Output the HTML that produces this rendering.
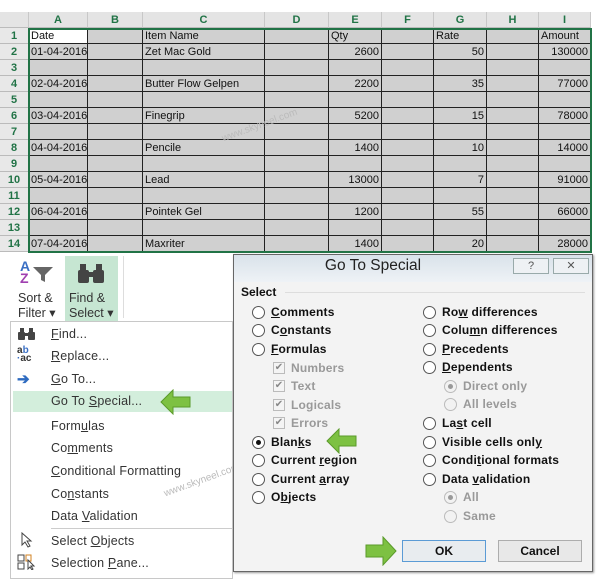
<!DOCTYPE html>
<html><head><meta charset="utf-8"><style>
*{margin:0;padding:0;box-sizing:border-box}
body{width:600px;height:580px;background:#fff;position:relative;overflow:hidden;font-family:"Liberation Sans",sans-serif;}
.a{position:absolute;white-space:nowrap}
.c{position:absolute;background:#d0d0d0;border-right:1px solid #222;border-bottom:1px solid #222;font-size:11px;line-height:16px;padding:0 2px;color:#111;overflow:hidden;white-space:nowrap}
.h{position:absolute;background:#e4e4e4;color:#217346;font-weight:bold;font-size:11px;text-align:center;line-height:16px;border-right:1px solid #c8c8c8;border-bottom:1px solid #bbb}
.r{text-align:right}
.mi{position:absolute;left:51px;font-size:12.5px;color:#333;letter-spacing:.2px;white-space:nowrap}
.rad{position:absolute;width:13px;height:13px;border:1px solid #555;border-radius:50%;background:#fff}
.rad.dis{border-color:#bbb;background:#f2f2f2}
.dot::after{content:"";position:absolute;left:3px;top:3px;width:5px;height:5px;border-radius:50%;background:#111}
.dot.dis::after{background:#999}
.t{position:absolute;font-size:12px;color:#111;font-weight:bold;letter-spacing:.2px;white-space:nowrap}
.t.g{color:#999}
.cb{position:absolute;width:12px;height:12px;border:1px solid #bbb;background:#f4f4f4;font-size:10px;color:#888;line-height:10px;text-align:center}
u{text-decoration:underline}
</style></head><body>

<div class="h" style="left:0;top:12px;width:29px;height:16px;background:#e4e4e4"></div>
<div class="h" style="left:29px;top:12px;width:59px;height:16px">A</div>
<div class="h" style="left:88px;top:12px;width:55px;height:16px">B</div>
<div class="h" style="left:143px;top:12px;width:122px;height:16px">C</div>
<div class="h" style="left:265px;top:12px;width:64px;height:16px">D</div>
<div class="h" style="left:329px;top:12px;width:53px;height:16px">E</div>
<div class="h" style="left:382px;top:12px;width:52px;height:16px">F</div>
<div class="h" style="left:434px;top:12px;width:53px;height:16px">G</div>
<div class="h" style="left:487px;top:12px;width:52px;height:16px">H</div>
<div class="h" style="left:539px;top:12px;width:52px;height:16px">I</div>
<div id="grid"></div>
<script>
var cols=[[29,59],[88,55],[143,122],[265,64],[329,53],[382,52],[434,53],[487,52],[539,52]];
var data={1:["Date","","Item Name","","Qty","","Rate","","Amount"],
2:["01-04-2016","","Zet Mac Gold","","2600","","50","","130000"],
4:["02-04-2016","","Butter Flow Gelpen","","2200","","35","","77000"],
6:["03-04-2016","","Finegrip","","5200","","15","","78000"],
8:["04-04-2016","","Pencile","","1400","","10","","14000"],
10:["05-04-2016","","Lead","","13000","","7","","91000"],
12:["06-04-2016","","Pointek Gel","","1200","","55","","66000"],
14:["07-04-2016","","Maxriter","","1400","","20","","28000"]};
var h="";
for(var r=1;r<=14;r++){var y=28+(r-1)*16;
h+='<div class="h" style="left:0;top:'+y+'px;width:29px;height:16px;background:#e8e8e8">'+r+'</div>';
for(var c=0;c<9;c++){var t=data[r]?data[r][c]:"";var right=(r>1&&c>=4)?" r":"";
var bg=(r==1&&c==0)?"background:#fff;":"";
h+='<div class="c'+right+'" style="'+bg+'left:'+cols[c][0]+'px;top:'+y+'px;width:'+cols[c][1]+'px;height:16px">'+t+'</div>';}}
document.getElementById("grid").innerHTML=h;
</script>
<div class="a" style="left:28px;top:28px;width:564px;height:225px;border:2px solid #217346"></div>
<div class="a" style="left:220px;top:120px;font-size:10px;color:#bbb;transform:rotate(-20deg)">www.skyneel.com</div>

<div class="a" style="left:20px;top:260px;font-size:14px;font-weight:bold;color:#3a6fc4;line-height:12px">A<br><span style="color:#a040b0">Z</span></div>
<svg class="a" style="left:32px;top:265px" width="22" height="18"><path d="M1 2h20l-8 8v7l-4-2v-5z" fill="#666"/></svg>
<div class="a" style="left:18px;top:291px;font-size:12.5px;color:#333;line-height:15px">Sort &amp;<br>Filter ▾</div>
<div class="a" style="left:65px;top:256px;width:53px;height:65px;background:#c6e6d2"></div>
<svg class="a" style="left:76px;top:262px" width="30" height="22"><rect x="2" y="8" width="11" height="13" rx="2" fill="#444"/><rect x="17" y="8" width="11" height="13" rx="2" fill="#444"/><rect x="4" y="2" width="6" height="8" fill="#444"/><rect x="20" y="2" width="6" height="8" fill="#444"/><rect x="12" y="10" width="6" height="5" fill="#444"/></svg>
<div class="a" style="left:69px;top:291px;font-size:12.5px;color:#333;line-height:15px">Find &amp;<br>Select ▾</div>
<div class="a" style="left:123px;top:256px;width:1px;height:62px;background:#ddd"></div>

<div class="a" style="left:10px;top:321px;width:223px;height:258px;background:#fff;border:1px solid #c8c8c8"></div>
<div class="a" style="left:13px;top:391px;width:219px;height:21px;background:#d3eedc"></div>
<svg class="a" style="left:17px;top:327px" width="20" height="14"><rect x="1" y="5" width="7" height="8" rx="1" fill="#444"/><rect x="11" y="5" width="7" height="8" rx="1" fill="#444"/><rect x="3" y="1" width="4" height="5" fill="#444"/><rect x="12" y="1" width="4" height="5" fill="#444"/><rect x="7" y="6" width="5" height="3" fill="#444"/></svg>
<div class="a" style="left:17px;top:347px;font-size:10px;font-weight:bold;line-height:8px;color:#333">a<span style="color:#3a6fc4">b</span><br><span style="color:#3a6fc4">·</span>ac</div>
<div class="a" style="left:17px;top:370px;font-size:15px;color:#2e6bc0;font-weight:bold">➔</div>
<div class="mi" style="top:327px"><u>F</u>ind...</div>
<div class="mi" style="top:349px"><u>R</u>eplace...</div>
<div class="mi" style="top:372px"><u>G</u>o To...</div>
<div class="mi" style="top:394px">Go To <u>S</u>pecial...</div>
<div class="mi" style="top:419px">Form<u>u</u>las</div>
<div class="mi" style="top:441px">Co<u>m</u>ments</div>
<div class="mi" style="top:464px"><u>C</u>onditional Formatting</div>
<div class="mi" style="top:487px">Co<u>n</u>stants</div>
<div class="mi" style="top:509px">Data <u>V</u>alidation</div>
<div class="a" style="left:51px;top:528px;width:181px;height:1px;background:#ccc"></div>
<div class="mi" style="top:534px">Select <u>O</u>bjects</div>
<div class="mi" style="top:556px">Selection <u>P</u>ane...</div>
<svg class="a" style="left:20px;top:532px" width="14" height="16"><path d="M2 1v12l3-3 3 5 2-1-3-5h4z" fill="#fff" stroke="#444"/></svg>
<svg class="a" style="left:17px;top:554px" width="20" height="16"><rect x="1" y="1" width="6" height="6" fill="none" stroke="#444"/><rect x="1" y="9" width="6" height="6" fill="none" stroke="#444"/><rect x="9" y="1" width="5" height="6" fill="none" stroke="#d08020"/><path d="M11 6v9l2-2 2 3 1-1-2-3h3z" fill="#fff" stroke="#444"/></svg>
<svg class="a" style="left:160px;top:389px" width="32" height="26"><path d="M1 13L13 1v7h17v10H13v7z" fill="#7dc142" stroke="#5a9a2a"/></svg>
<div class="a" style="left:162px;top:475px;font-size:10px;color:#bbb;transform:rotate(-20deg)">www.skyneel.com</div>

<div class="a" style="left:233px;top:254px;width:360px;height:318px;background:#f3f3f3;border:1px solid #666;box-shadow:1px 1px 2px #999"></div>
<div class="a" style="left:234px;top:255px;width:358px;height:27px;background:linear-gradient(#d9e2ea,#eef2f6)"></div>
<div class="a" style="left:234px;top:257px;width:278px;text-align:center;font-size:15.5px;color:#222">Go To Special</div>
<div class="a" style="left:513px;top:258px;width:36px;height:16px;border:1px solid #9aa;background:#eef1f4;font-size:11px;text-align:center;color:#555;line-height:14px">?</div>
<div class="a" style="left:553px;top:258px;width:36px;height:16px;border:1px solid #9aa;background:#eef1f4;font-size:11px;text-align:center;color:#555;line-height:14px">✕</div>
<div class="a" style="left:241px;top:285px;font-size:12px;color:#111;font-weight:bold">Select</div>
<div class="a" style="left:285px;top:292px;width:300px;height:1px;background:#ddd"></div>

<div class="rad" style="left:252px;top:306px"></div><div class="t" style="left:271px;top:305px"><u>C</u>omments</div>
<div class="rad" style="left:252px;top:324px"></div><div class="t" style="left:271px;top:323px">C<u>o</u>nstants</div>
<div class="rad" style="left:252px;top:343px"></div><div class="t" style="left:271px;top:342px"><u>F</u>ormulas</div>
<div class="cb" style="left:273px;top:362px">✔</div><div class="t g" style="left:291px;top:361px">Numbers</div>
<div class="cb" style="left:273px;top:380px">✔</div><div class="t g" style="left:291px;top:379px">Text</div>
<div class="cb" style="left:273px;top:399px">✔</div><div class="t g" style="left:291px;top:398px">Logicals</div>
<div class="cb" style="left:273px;top:417px">✔</div><div class="t g" style="left:291px;top:416px">Errors</div>
<div class="rad dot" style="left:252px;top:436px"></div><div class="t" style="left:271px;top:435px">Blan<u>k</u>s</div>
<div class="rad" style="left:252px;top:454px"></div><div class="t" style="left:271px;top:453px">Current <u>r</u>egion</div>
<div class="rad" style="left:252px;top:473px"></div><div class="t" style="left:271px;top:472px">Current <u>a</u>rray</div>
<div class="rad" style="left:252px;top:491px"></div><div class="t" style="left:271px;top:490px">O<u>b</u>jects</div>
<svg class="a" style="left:326px;top:428px" width="32" height="26"><path d="M1 13L13 1v7h17v10H13v7z" fill="#7dc142" stroke="#5a9a2a"/></svg>

<div class="rad" style="left:423px;top:306px"></div><div class="t" style="left:442px;top:305px">Ro<u>w</u> differences</div>
<div class="rad" style="left:423px;top:324px"></div><div class="t" style="left:442px;top:323px">Colu<u>m</u>n differences</div>
<div class="rad" style="left:423px;top:343px"></div><div class="t" style="left:442px;top:342px"><u>P</u>recedents</div>
<div class="rad" style="left:423px;top:361px"></div><div class="t" style="left:442px;top:360px"><u>D</u>ependents</div>
<div class="rad dot dis" style="left:444px;top:380px"></div><div class="t g" style="left:463px;top:379px">Direct only</div>
<div class="rad dis" style="left:444px;top:398px"></div><div class="t g" style="left:463px;top:397px">All levels</div>
<div class="rad" style="left:423px;top:417px"></div><div class="t" style="left:442px;top:416px">La<u>s</u>t cell</div>
<div class="rad" style="left:423px;top:436px"></div><div class="t" style="left:442px;top:435px">Visible cells onl<u>y</u></div>
<div class="rad" style="left:423px;top:454px"></div><div class="t" style="left:442px;top:453px">Condi<u>t</u>ional formats</div>
<div class="rad" style="left:423px;top:473px"></div><div class="t" style="left:442px;top:472px">Data <u>v</u>alidation</div>
<div class="rad dot dis" style="left:444px;top:491px"></div><div class="t g" style="left:463px;top:490px">All</div>
<div class="rad dis" style="left:444px;top:510px"></div><div class="t g" style="left:463px;top:509px">Same</div>

<svg class="a" style="left:365px;top:536px" width="32" height="30"><path d="M31 15L18 1v8H1v12h17v8z" fill="#7dc142" stroke="#5a9a2a"/></svg>
<div class="a" style="left:402px;top:540px;width:84px;height:22px;border:1px solid #5b9bd5;background:#e8ecef;font-size:12px;font-weight:bold;text-align:center;line-height:20px;color:#111">OK</div>
<div class="a" style="left:498px;top:540px;width:84px;height:22px;border:1px solid #adadad;background:#e8e8e8;font-size:12px;font-weight:bold;text-align:center;line-height:20px;color:#111">Cancel</div>
</body></html>
